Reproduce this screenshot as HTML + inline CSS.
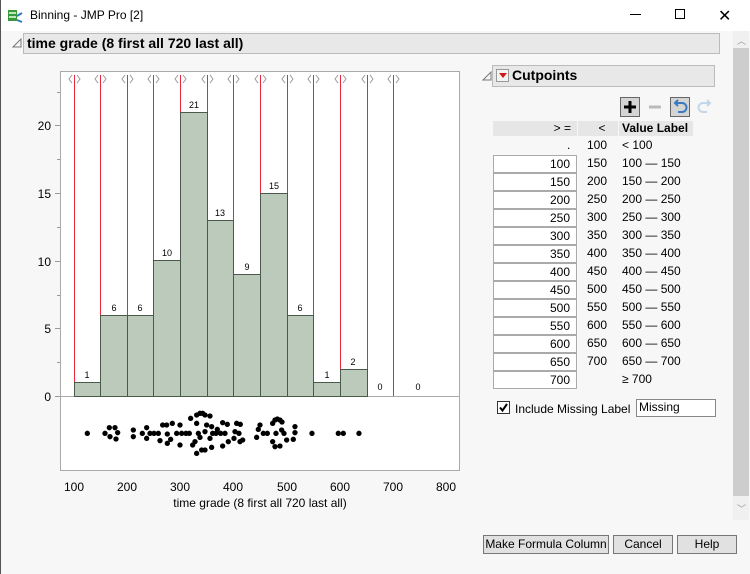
<!DOCTYPE html>
<html><head><style>
*{margin:0;padding:0;box-sizing:border-box}
body{width:750px;height:574px;overflow:hidden;background:#f7f7f7;font-family:"Liberation Sans",sans-serif;position:relative;}
.a{position:absolute}
.cell{position:absolute;font-size:12px;color:#000;}
.inp{position:absolute;left:493px;width:84px;height:18px;background:#fff;border:1px solid #aaa;font-size:12px;text-align:right;padding-right:6px;line-height:16px}
.btn{position:absolute;top:535px;height:19px;background:#e1e1e1;border:1px solid #777;font-size:12px;text-align:center;line-height:17px}
</style></head><body>
<div class="a" style="left:0;top:0;width:1px;height:574px;background:#555"></div>
<div class="a" style="left:1px;top:0;width:749px;height:31px;background:#fff"></div>
<svg class="a" style="left:7px;top:8px" width="16" height="16"><rect x="1" y="2" width="9" height="11" fill="#3a9a3a"/><rect x="2" y="4" width="7" height="2" fill="#bfe6bf"/><rect x="2" y="8" width="7" height="2" fill="#bfe6bf"/><path d="M10 8 l5 -3 M10 12 l5 2" stroke="#2a7ac8" stroke-width="2"/></svg>
<div class="a" style="left:30px;top:8px;font-size:12px">Binning - JMP Pro [2]</div>
<div class="a" style="left:630px;top:14px;width:11px;height:1px;background:#000"></div>
<div class="a" style="left:675px;top:9px;width:10px;height:10px;border:1px solid #000"></div>
<div class="a" style="left:718px;top:6px;font-size:16px">✕</div>

<svg class="a" style="left:12px;top:38px" width="10" height="10"><path d="M9 1 L9 9 L1 9 Z" fill="none" stroke="#777"/></svg>
<div class="a" style="left:23px;top:33px;width:697px;height:21px;background:#e8e8e8;border:1px solid #bbb;font-weight:bold;font-size:14px;line-height:19px;padding-left:3px">time grade (8 first all 720 last all)</div>

<div class="a" style="left:733px;top:31px;width:16px;height:489px;background:#f0f0f0"></div>
<div class="a" style="left:733px;top:48px;width:16px;height:448px;background:#cdcdcd"></div>
<div class="a" style="left:737px;top:34px;font-size:9px;color:#999">︿</div>
<div class="a" style="left:737px;top:502px;font-size:9px;color:#999">﹀</div>

<svg class="a" style="left:0;top:0" width="480" height="520">
<rect x="60.5" y="71.5" width="399" height="399" fill="#fff" stroke="#aaa"/>
<line x1="60" y1="396.5" x2="460" y2="396.5" stroke="#aaa"/>
<g stroke="#999"><line x1="55" y1="396.5" x2="60" y2="396.5"/><line x1="55" y1="328.5" x2="60" y2="328.5"/><line x1="55" y1="261.5" x2="60" y2="261.5"/><line x1="55" y1="193.5" x2="60" y2="193.5"/><line x1="55" y1="125.5" x2="60" y2="125.5"/>
<line x1="57" y1="362.5" x2="60" y2="362.5"/><line x1="57" y1="295.5" x2="60" y2="295.5"/><line x1="57" y1="227.5" x2="60" y2="227.5"/><line x1="57" y1="159.5" x2="60" y2="159.5"/><line x1="57" y1="92.5" x2="60" y2="92.5"/></g>
<g font-size="12" text-anchor="end" fill="#000"><text x="51" y="401">0</text><text x="51" y="333">5</text><text x="51" y="266">10</text><text x="51" y="198">15</text><text x="51" y="130">20</text></g>
<g stroke="#e8283c"><line x1="74.5" y1="75" x2="74.5" y2="396"/><line x1="100.5" y1="75" x2="100.5" y2="396"/><line x1="127.5" y1="75" x2="127.5" y2="396"/><line x1="153.5" y1="75" x2="153.5" y2="396"/><line x1="180.5" y1="75" x2="180.5" y2="396"/><line x1="207.5" y1="75" x2="207.5" y2="396"/><line x1="233.5" y1="75" x2="233.5" y2="396"/><line x1="260.5" y1="75" x2="260.5" y2="396"/><line x1="287.5" y1="75" x2="287.5" y2="396"/><line x1="313.5" y1="75" x2="313.5" y2="396"/><line x1="340.5" y1="75" x2="340.5" y2="396"/><line x1="367.5" y1="75" x2="367.5" y2="396"/><line x1="393.5" y1="75" x2="393.5" y2="396"/></g>
<g fill="none" stroke="#999">
<path d="M72 75 l-3 4 l3 4 M77 75 l3 4 l-3 4"/><path d="M98 75 l-3 4 l3 4 M103 75 l3 4 l-3 4"/><path d="M125 75 l-3 4 l3 4 M130 75 l3 4 l-3 4"/><path d="M151 75 l-3 4 l3 4 M156 75 l3 4 l-3 4"/><path d="M178 75 l-3 4 l3 4 M183 75 l3 4 l-3 4"/><path d="M205 75 l-3 4 l3 4 M210 75 l3 4 l-3 4"/><path d="M231 75 l-3 4 l3 4 M236 75 l3 4 l-3 4"/><path d="M258 75 l-3 4 l3 4 M263 75 l3 4 l-3 4"/><path d="M285 75 l-3 4 l3 4 M290 75 l3 4 l-3 4"/><path d="M311 75 l-3 4 l3 4 M316 75 l3 4 l-3 4"/><path d="M338 75 l-3 4 l3 4 M343 75 l3 4 l-3 4"/><path d="M365 75 l-3 4 l3 4 M370 75 l3 4 l-3 4"/><path d="M391 75 l-3 4 l3 4 M396 75 l3 4 l-3 4"/></g>
<g fill="#bbcabb" stroke="#4a5a4a">
<rect x="74.5" y="382.5" width="26" height="14"/><rect x="100.5" y="315.5" width="27" height="81"/><rect x="127.5" y="315.5" width="26" height="81"/><rect x="153.5" y="260.5" width="27" height="136"/><rect x="180.5" y="112.5" width="27" height="284"/><rect x="207.5" y="220.5" width="26" height="176"/><rect x="233.5" y="274.5" width="27" height="122"/><rect x="260.5" y="193.5" width="27" height="203"/><rect x="287.5" y="315.5" width="26" height="81"/><rect x="313.5" y="382.5" width="27" height="14"/><rect x="340.5" y="369.5" width="27" height="27"/></g>
<g font-size="9" text-anchor="middle" fill="#000"><text x="87" y="378">1</text><text x="114" y="311">6</text><text x="140" y="311">6</text><text x="167" y="256">10</text><text x="194" y="108">21</text><text x="220" y="216">13</text><text x="247" y="270">9</text><text x="274" y="189">15</text><text x="300" y="311">6</text><text x="327" y="378">1</text><text x="353" y="365">2</text><text x="380" y="390">0</text><text x="418" y="390">0</text></g>
<g transform="translate(30 360) scale(0.3333)" fill="#000">
<circle cx="172" cy="220" r="8"/><circle cx="225" cy="220" r="8"/><circle cx="238" cy="203" r="8"/><circle cx="240" cy="230" r="8"/><circle cx="255" cy="203" r="8"/><circle cx="258" cy="237" r="8"/><circle cx="263" cy="218" r="8"/><circle cx="310" cy="210" r="8"/><circle cx="310" cy="230" r="8"/><circle cx="337" cy="220" r="8"/><circle cx="350" cy="203" r="8"/><circle cx="350" cy="235" r="8"/><circle cx="360" cy="220" r="8"/><circle cx="372" cy="220" r="8"/><circle cx="385" cy="220" r="8"/><circle cx="390" cy="242" r="8"/><circle cx="398" cy="195" r="8"/><circle cx="410" cy="195" r="8"/><circle cx="412" cy="222" r="8"/><circle cx="412" cy="250" r="8"/><circle cx="427" cy="190" r="8"/><circle cx="422" cy="238" r="8"/><circle cx="440" cy="220" r="8"/><circle cx="450" cy="195" r="8"/><circle cx="450" cy="255" r="8"/><circle cx="455" cy="220" r="8"/><circle cx="468" cy="220" r="8"/><circle cx="478" cy="220" r="8"/><circle cx="482" cy="175" r="8"/><circle cx="488" cy="255" r="8"/><circle cx="495" cy="245" r="8"/><circle cx="500" cy="190" r="8"/><circle cx="500" cy="165" r="8"/><circle cx="505" cy="220" r="8"/><circle cx="510" cy="160" r="8"/><circle cx="518" cy="160" r="8"/><circle cx="525" cy="165" r="8"/><circle cx="500" cy="280" r="8"/><circle cx="510" cy="232" r="8"/><circle cx="515" cy="270" r="8"/><circle cx="525" cy="270" r="8"/><circle cx="525" cy="215" r="8"/><circle cx="530" cy="195" r="8"/><circle cx="540" cy="168" r="8"/><circle cx="540" cy="235" r="8"/><circle cx="545" cy="262" r="8"/><circle cx="548" cy="220" r="8"/><circle cx="545" cy="200" r="8"/><circle cx="558" cy="220" r="8"/><circle cx="562" cy="208" r="8"/><circle cx="572" cy="220" r="8"/><circle cx="578" cy="188" r="8"/><circle cx="578" cy="258" r="8"/><circle cx="585" cy="220" r="8"/><circle cx="592" cy="193" r="8"/><circle cx="595" cy="245" r="8"/><circle cx="612" cy="235" r="8"/><circle cx="615" cy="215" r="8"/><circle cx="620" cy="190" r="8"/><circle cx="631" cy="193" r="8"/><circle cx="627" cy="220" r="8"/><circle cx="630" cy="245" r="8"/><circle cx="638" cy="240" r="8"/><circle cx="680" cy="232" r="8"/><circle cx="685" cy="208" r="8"/><circle cx="690" cy="195" r="8"/><circle cx="700" cy="220" r="8"/><circle cx="712" cy="220" r="8"/><circle cx="728" cy="190" r="8"/><circle cx="728" cy="245" r="8"/><circle cx="735" cy="180" r="8"/><circle cx="742" cy="177" r="8"/><circle cx="750" cy="180" r="8"/><circle cx="756" cy="186" r="8"/><circle cx="738" cy="220" r="8"/><circle cx="735" cy="260" r="8"/><circle cx="750" cy="258" r="8"/><circle cx="755" cy="210" r="8"/><circle cx="762" cy="220" r="8"/><circle cx="770" cy="240" r="8"/><circle cx="790" cy="238" r="8"/><circle cx="795" cy="200" r="8"/><circle cx="795" cy="218" r="8"/><circle cx="846" cy="220" r="8"/><circle cx="925" cy="220" r="8"/><circle cx="940" cy="220" r="8"/><circle cx="987" cy="220" r="8"/></g>
<g font-size="12" text-anchor="middle" fill="#000"><text x="74" y="491">100</text><text x="127" y="491">200</text><text x="180" y="491">300</text><text x="233" y="491">400</text><text x="287" y="491">500</text><text x="340" y="491">600</text><text x="393" y="491">700</text><text x="446" y="491">800</text></g>
<text x="260" y="507" font-size="12" text-anchor="middle">time grade (8 first all 720 last all)</text>
</svg>

<svg class="a" style="left:482px;top:71px" width="10" height="10"><path d="M9 1 L9 9 L1 9 Z" fill="none" stroke="#777"/></svg>
<div class="a" style="left:492px;top:65px;width:223px;height:22px;background:#e8e8e8;border:1px solid #bbb"></div>
<div class="a" style="left:496px;top:69px;width:13px;height:13px;background:#f4f4f4;border:1px solid #999"></div>
<svg class="a" style="left:498px;top:73px" width="10" height="6"><path d="M1 0 L9 0 L5 5 Z" fill="#d01818"/></svg>
<div class="a" style="left:512px;top:67px;font-size:14px;font-weight:bold">Cutpoints</div>

<div class="a" style="left:620px;top:97px;width:20px;height:20px;background:#d4d4d4;border:1px solid #666"></div>
<svg class="a" style="left:620px;top:97px" width="20" height="20"><path d="M10 4 V16 M4 10 H16" stroke="#000" stroke-width="3"/></svg>
<svg class="a" style="left:645px;top:97px" width="20" height="20"><path d="M4 10 H16" stroke="#bbb" stroke-width="3"/></svg>
<div class="a" style="left:670px;top:97px;width:20px;height:20px;background:#d4d4d4;border:1px solid #666"></div>
<svg class="a" style="left:670px;top:97px" width="20" height="20"><path d="M6 6 H12 A4 4 0 0 1 12 15 H8 M8 3 L5 6 L8 9" fill="none" stroke="#3a7ac0" stroke-width="2"/></svg>
<svg class="a" style="left:695px;top:97px" width="20" height="20"><path d="M14 6 H8 A4 4 0 0 0 8 15 H12 M12 3 L15 6 L12 9" fill="none" stroke="#c4d6ea" stroke-width="2"/></svg>

<div class="a" style="left:493px;top:121px;width:84px;height:15px;background:#e6e6e6;font-size:12px;text-align:right;padding-right:6px">&gt; =</div>
<div class="a" style="left:578px;top:121px;width:40px;height:15px;background:#e6e6e6;font-size:12px;text-align:center;padding-left:8px">&lt;</div>
<div class="a" style="left:619px;top:121px;width:74px;height:15px;background:#e6e6e6;font-size:12px;font-weight:bold;padding-left:3px">Value Label</div>
<div class="cell" style="left:567px;top:138px">.</div>
<div class="cell" style="left:587px;top:138px">100</div>
<div class="cell" style="left:622px;top:138px">&lt; 100</div>

<div class="inp" style="top:155px">100</div><div class="cell" style="left:587px;top:156px">150</div><div class="cell" style="left:622px;top:156px">100 — 150</div>
<div class="inp" style="top:173px">150</div><div class="cell" style="left:587px;top:174px">200</div><div class="cell" style="left:622px;top:174px">150 — 200</div>
<div class="inp" style="top:191px">200</div><div class="cell" style="left:587px;top:192px">250</div><div class="cell" style="left:622px;top:192px">200 — 250</div>
<div class="inp" style="top:209px">250</div><div class="cell" style="left:587px;top:210px">300</div><div class="cell" style="left:622px;top:210px">250 — 300</div>
<div class="inp" style="top:227px">300</div><div class="cell" style="left:587px;top:228px">350</div><div class="cell" style="left:622px;top:228px">300 — 350</div>
<div class="inp" style="top:245px">350</div><div class="cell" style="left:587px;top:246px">400</div><div class="cell" style="left:622px;top:246px">350 — 400</div>
<div class="inp" style="top:263px">400</div><div class="cell" style="left:587px;top:264px">450</div><div class="cell" style="left:622px;top:264px">400 — 450</div>
<div class="inp" style="top:281px">450</div><div class="cell" style="left:587px;top:282px">500</div><div class="cell" style="left:622px;top:282px">450 — 500</div>
<div class="inp" style="top:299px">500</div><div class="cell" style="left:587px;top:300px">550</div><div class="cell" style="left:622px;top:300px">500 — 550</div>
<div class="inp" style="top:317px">550</div><div class="cell" style="left:587px;top:318px">600</div><div class="cell" style="left:622px;top:318px">550 — 600</div>
<div class="inp" style="top:335px">600</div><div class="cell" style="left:587px;top:336px">650</div><div class="cell" style="left:622px;top:336px">600 — 650</div>
<div class="inp" style="top:353px">650</div><div class="cell" style="left:587px;top:354px">700</div><div class="cell" style="left:622px;top:354px">650 — 700</div>
<div class="inp" style="top:371px">700</div><div class="cell" style="left:622px;top:372px">≥ 700</div>

<div class="a" style="left:497px;top:401px;width:13px;height:13px;background:#fff;border:1px solid #333"></div>
<svg class="a" style="left:497px;top:401px" width="13" height="13"><path d="M3 6.5 L5.5 9.5 L10 3" fill="none" stroke="#000" stroke-width="2"/></svg>
<div class="cell" style="left:515px;top:402px">Include Missing Label</div>
<div class="a" style="left:636px;top:399px;width:80px;height:18px;background:#fff;border:1px solid #888;font-size:12px;padding-left:2px;line-height:14px">Missing</div>

<div class="btn" style="left:483px;width:126px">Make Formula Column</div>
<div class="btn" style="left:613px;width:60px">Cancel</div>
<div class="btn" style="left:677px;width:60px">Help</div>
</body></html>
